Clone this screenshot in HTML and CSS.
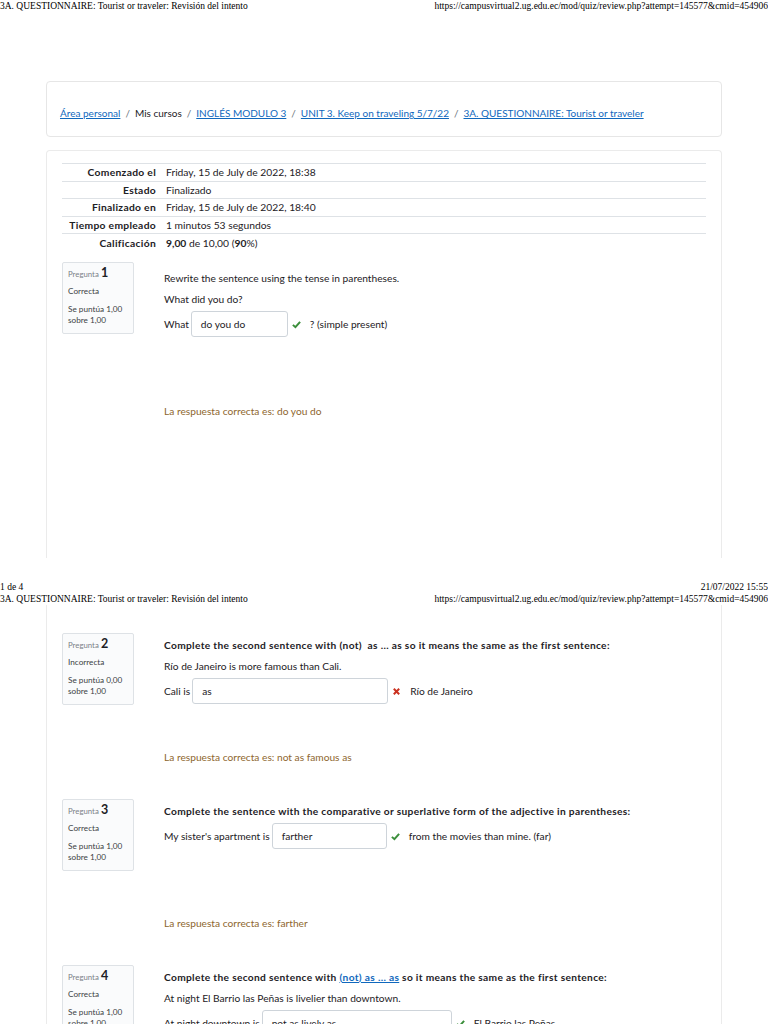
FILE: index.html
```html
<!DOCTYPE html>
<html lang="es">
<head>
<meta charset="utf-8">
<title>3A. QUESTIONNAIRE: Tourist or traveler: Revisión del intento</title>
<link rel="stylesheet" href="styles.css">
</head>
<body>
<div class="doc-head">
  <span>3A. QUESTIONNAIRE: Tourist or traveler: Revisión del intento</span>
  <span>https://campusvirtual2.ug.edu.ec/mod/quiz/review.php?attempt=145577&amp;cmid=454906</span>
</div>

<div class="sheet sheet-1">
  <nav class="crumb-card">
    <ol class="crumbs">
      <li><a href="#">Área personal</a></li>
      <li class="sep">/</li>
      <li>Mis cursos</li>
      <li class="sep">/</li>
      <li><a href="#">INGLÉS MODULO 3</a></li>
      <li class="sep">/</li>
      <li><a href="#">UNIT 3. Keep on traveling 5/7/22</a></li>
      <li class="sep">/</li>
      <li><a href="#">3A. QUESTIONNAIRE: Tourist or traveler</a></li>
    </ol>
  </nav>

  <section class="main-card main-card-first">
    <table class="summary">
      <tr><th>Comenzado el</th><td>Friday, 15 de July de 2022, 18:38</td></tr>
      <tr><th>Estado</th><td>Finalizado</td></tr>
      <tr><th>Finalizado en</th><td>Friday, 15 de July de 2022, 18:40</td></tr>
      <tr><th>Tiempo empleado</th><td>1 minutos 53 segundos</td></tr>
      <tr><th>Calificación</th><td><b>9,00</b> de 10,00 (<b>90</b>%)</td></tr>
    </table>

    <div class="que que-first">
      <div class="info">
        <div class="qno"><span class="qlabel">Pregunta</span> <b>1</b></div>
        <div class="state">Correcta</div>
        <div class="grade">Se puntúa 1,00<br>sobre 1,00</div>
      </div>
      <div class="content">
        <div class="formulation">
          <p class="qtext">Rewrite the sentence using the tense in parentheses.</p>
          <p class="qtext">What did you do?</p>
          <div class="answer-row">
            <span>What</span>
            <span class="field w1">do you do</span>
            <svg class="mark ok" viewBox="0 0 10 10"><path d="M1 5.4 L3.8 8 L9 2" /></svg>
            <span>? (simple present)</span>
          </div>
        </div>
        <div class="outcome">La respuesta correcta es: do you do</div>
      </div>
    </div>
  </section>
</div>

<div class="doc-foot">
  <span>1 de 4</span>
  <span>21/07/2022 15:55</span>
</div>
<div class="doc-head">
  <span>3A. QUESTIONNAIRE: Tourist or traveler: Revisión del intento</span>
  <span>https://campusvirtual2.ug.edu.ec/mod/quiz/review.php?attempt=145577&amp;cmid=454906</span>
</div>

<div class="sheet sheet-2">
  <section class="main-card main-card-cont">
    <div class="que">
      <div class="info">
        <div class="qno"><span class="qlabel">Pregunta</span> <b>2</b></div>
        <div class="state">Incorrecta</div>
        <div class="grade">Se puntúa 0,00<br>sobre 1,00</div>
      </div>
      <div class="content">
        <div class="formulation">
          <p class="qtext strong">Complete the second sentence with (not)&nbsp; as ... as so it means the same as the first sentence:</p>
          <p class="qtext">Río de Janeiro is more famous than Cali.</p>
          <div class="answer-row">
            <span>Cali is</span>
            <span class="field w2">as</span>
            <svg class="mark bad" viewBox="0 0 10 10"><path d="M2 2 L8 8 M8 2 L2 8" /></svg>
            <span>Río de Janeiro</span>
          </div>
        </div>
        <div class="outcome">La respuesta correcta es: not as famous as</div>
      </div>
    </div>

    <div class="que">
      <div class="info">
        <div class="qno"><span class="qlabel">Pregunta</span> <b>3</b></div>
        <div class="state">Correcta</div>
        <div class="grade">Se puntúa 1,00<br>sobre 1,00</div>
      </div>
      <div class="content">
        <div class="formulation">
          <p class="qtext strong">Complete the sentence with the comparative or superlative form of the adjective in parentheses:</p>
          <div class="answer-row">
            <span>My sister's apartment is</span>
            <span class="field w3">farther</span>
            <svg class="mark ok" viewBox="0 0 10 10"><path d="M1 5.4 L3.8 8 L9 2" /></svg>
            <span>from the movies than mine. (far)</span>
          </div>
        </div>
        <div class="outcome">La respuesta correcta es: farther</div>
      </div>
    </div>

    <div class="que">
      <div class="info">
        <div class="qno"><span class="qlabel">Pregunta</span> <b>4</b></div>
        <div class="state">Correcta</div>
        <div class="grade">Se puntúa 1,00<br>sobre 1,00</div>
      </div>
      <div class="content">
        <div class="formulation">
          <p class="qtext strong">Complete the second sentence with <a href="#">(not) as ... as</a> so it means the same as the first sentence:</p>
          <p class="qtext">At night El Barrio las Peñas is livelier than downtown.</p>
          <div class="answer-row">
            <span>At night downtown is</span>
            <span class="field w4">not as lively as</span>
            <svg class="mark ok" viewBox="0 0 10 10"><path d="M1 5.4 L3.8 8 L9 2" /></svg>
            <span>El Barrio las Peñas.</span>
          </div>
        </div>
      </div>
    </div>
  </section>
</div>
</body>
</html>
```

FILE: styles.css
```css
html, body {
  margin: 0;
  padding: 0;
  overflow: hidden;
  background: #ffffff;
}

body {
  font-family: Lato, "Noto Sans", sans-serif;
  font-size: 10.2px;
  color: #1d2125;
}

.doc-head,
.doc-foot {
  display: flex;
  justify-content: space-between;
  font-family: "Liberation Serif", serif;
  font-size: 9.5px;
  line-height: 12px;
  height: 12px;
  color: #000;
  white-space: nowrap;
}

.sheet-1 {
  height: 569px;
  padding-top: 69px;
  box-sizing: border-box;
}

.crumb-card {
  margin: 0 46px;
  height: 56px;
  box-sizing: border-box;
  border: 1px solid #e6e6e6;
  border-radius: 4px;
  padding: 22px 13px 0;
}

.crumbs {
  list-style: none;
  margin: 0;
  padding: 0;
  display: flex;
  gap: 5px;
  line-height: 18px;
  font-size: 10px;
  white-space: nowrap;
}

.crumbs a,
.qtext a {
  color: #1068bd;
  text-decoration: underline;
}

.crumbs .sep {
  color: #6a737b;
}

.main-card {
  margin: 0 46px;
  border: 1px solid #ebebeb;
  padding: 0 15px;
}

.main-card-first {
  margin-top: 13px;
  height: 408px;
  box-sizing: border-box;
  border-bottom: none;
  border-radius: 4px 4px 0 0;
  padding-top: 12px;
}

.main-card-cont {
  border-top: none;
  border-bottom: none;
  padding-top: 28px;
  height: 440px;
  box-sizing: border-box;
}

.summary {
  width: 100%;
  border-collapse: collapse;
  font-size: 10.3px;
}

.summary th,
.summary td {
  border-top: 1px solid #dee2e6;
  height: 17.5px;
  padding: 0 5px;
  line-height: 16px;
  box-sizing: border-box;
}

.summary th {
  width: 99px;
  text-align: right;
  font-weight: 700;
  letter-spacing: 0.3px;
  white-space: nowrap;
}

.summary td {
  text-align: left;
}

.que {
  display: flex;
  gap: 30px;
  margin-bottom: 33px;
}

.que-first {
  margin-top: 11px;
}

.info {
  flex: none;
  width: 72px;
  height: 72px;
  box-sizing: border-box;
  border: 1px solid #dee2e6;
  border-radius: 2px;
  background: #fafbfc;
  padding: 2px 5px 0;
  font-size: 8.2px;
  color: #3a3f44;
}

.qno {
  line-height: 16px;
}

.qlabel {
  font-size: 7.8px;
  color: #7a8188;
}

.qno b {
  font-size: 12.5px;
  color: #1d2125;
}

.state {
  margin-top: 3px;
  line-height: 12px;
}

.grade {
  margin-top: 7px;
  line-height: 11px;
}

.content {
  flex: 1;
}

.formulation {
  min-height: 100px;
  padding-top: 3px;
  box-sizing: border-box;
}

.que-first .formulation {
  min-height: 125px;
  padding-top: 7px;
}

.qtext {
  margin: 0 0 3px;
  line-height: 18px;
}

.qtext.strong {
  font-weight: 700;
  letter-spacing: 0.33px;
}

.answer-row {
  display: flex;
  align-items: center;
  margin-top: 3px;
  height: 26px;
  white-space: nowrap;
}

.field {
  display: flex;
  align-items: center;
  height: 26px;
  box-sizing: border-box;
  margin-left: 2px;
  padding: 0 9px;
  border: 1px solid #ced4da;
  border-radius: 3px;
  background: #fff;
}

.w1 { width: 97px; }
.w2 { width: 196px; }
.w3 { width: 115px; }
.w4 { width: 190px; }

.mark {
  width: 9px;
  height: 9px;
  margin: 0 9px 0 4px;
  fill: none;
  stroke-width: 2.2;
}

.mark.ok {
  stroke: #3b8f3b;
}

.mark.bad {
  stroke: #ca3120;
}

.outcome {
  margin-top: 15px;
  line-height: 18px;
  color: #8e662e;
}
```
